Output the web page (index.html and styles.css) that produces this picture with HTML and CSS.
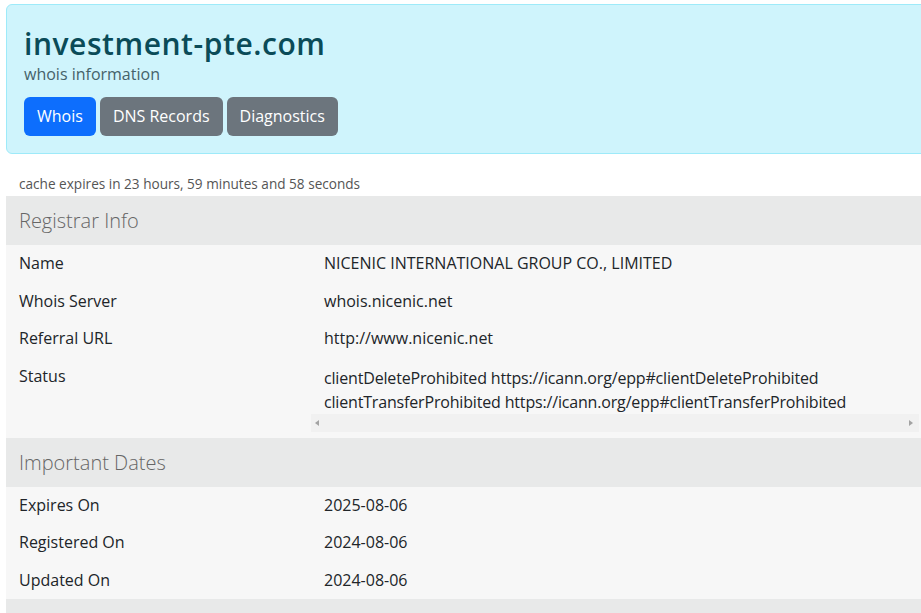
FILE: index.html
```html
<!DOCTYPE html>
<html lang="en">
<head>
<meta charset="utf-8">
<title>investment-pte.com whois</title>
<link rel="stylesheet" href="styles.css">
</head>
<body>
<div class="page">
  <div class="hero">
    <h1 class="title">investment-pte.com</h1>
    <div class="subtitle">whois information</div>
    <div class="tabs">
      <a class="btn btn-primary">Whois</a>
      <a class="btn btn-secondary">DNS Records</a>
      <a class="btn btn-secondary">Diagnostics</a>
    </div>
  </div>
  <div class="cache">cache expires in 23 hours, 59 minutes and 58 seconds</div>
  <table class="info">
    <colgroup><col class="col-label"><col class="col-value"></colgroup>
    <tbody>
      <tr class="section"><th colspan="2">Registrar Info</th></tr>
      <tr><td class="label">Name</td><td>NICENIC INTERNATIONAL GROUP CO., LIMITED</td></tr>
      <tr><td class="label">Whois Server</td><td>whois.nicenic.net</td></tr>
      <tr><td class="label">Referral URL</td><td>http://www.nicenic.net</td></tr>
      <tr class="status-row"><td class="label">Status</td><td class="status-cell">
        <div class="status-lines">
          <div>clientDeleteProhibited https://icann.org/epp#clientDeleteProhibited</div>
          <div>clientTransferProhibited https://icann.org/epp#clientTransferProhibited</div>
        </div>
        <div class="hscroll"><span class="arrow arrow-left"></span><span class="arrow arrow-right"></span></div>
      </td></tr>
      <tr class="section"><th colspan="2">Important Dates</th></tr>
      <tr><td class="label">Expires On</td><td>2025-08-06</td></tr>
      <tr><td class="label">Registered On</td><td>2024-08-06</td></tr>
      <tr><td class="label">Updated On</td><td>2024-08-06</td></tr>
      <tr class="section"><th colspan="2">&nbsp;</th></tr>
    </tbody>
  </table>
</div>
</body>
</html>
```
FILE: styles.css
```css
html, body {
  margin: 0;
  padding: 0;
  background: #ffffff;
  overflow: hidden;
}
body {
  font-family: "Open Sans", "Noto Sans", sans-serif;
  color: #212529;
  font-size: 16px;
}
.page {
  padding: 4px 0 0 6px;
  width: 926px;
}
.hero {
  background: #cff4fc;
  border: 1px solid #9eeaf9;
  border-radius: 6px;
  padding: 21px 17px 17px 17px;
}
.title {
  margin: 0;
  font-size: 30px;
  line-height: 36px;
  font-weight: 600;
  color: #0a4b58;
  letter-spacing: 0.55px;
}
.subtitle {
  font-size: 16px;
  line-height: 24px;
  color: #45626a;
}
.tabs {
  display: flex;
  gap: 4px;
  margin-top: 11px;
}
.btn {
  display: inline-block;
  height: 39px;
  line-height: 39px;
  padding: 0 13px;
  border-radius: 6px;
  font-size: 16px;
  color: #ffffff;
  box-sizing: border-box;
}
.btn-primary { background: #0d6efd; }
.btn-secondary { background: #6c757d; }
.cache {
  font-size: 13.6px;
  line-height: 18px;
  color: #555555;
  padding: 21px 0 3px 13px;
}
.info {
  width: 926px;
  border-collapse: collapse;
  table-layout: fixed;
}
.col-label { width: 305px; }
.info th {
  text-align: left;
  font-weight: 300;
  font-size: 20px;
  line-height: 29px;
  color: #666666;
  background: #e8e9e9;
  padding: 10px 13px;
}
.info td {
  background: #f7f7f7;
  padding: 8px 13px;
  line-height: 21.5px;
  vertical-align: top;
  white-space: nowrap;
  overflow: hidden;
}
.status-cell { padding-bottom: 6px !important; }
.status-lines div { line-height: 24px; letter-spacing: -0.17px; }
.hscroll {
  margin: 0 0 0 -15px;
  height: 18px;
  background: #f1f1f1;
  position: relative;
}
.arrow {
  position: absolute;
  top: 6px;
  width: 0;
  height: 0;
  border-top: 3.5px solid transparent;
  border-bottom: 3.5px solid transparent;
}
.arrow-left { left: 6px; border-right: 4px solid #a3a3a3; }
.arrow-right { right: 6px; border-left: 4px solid #a3a3a3; }
```
